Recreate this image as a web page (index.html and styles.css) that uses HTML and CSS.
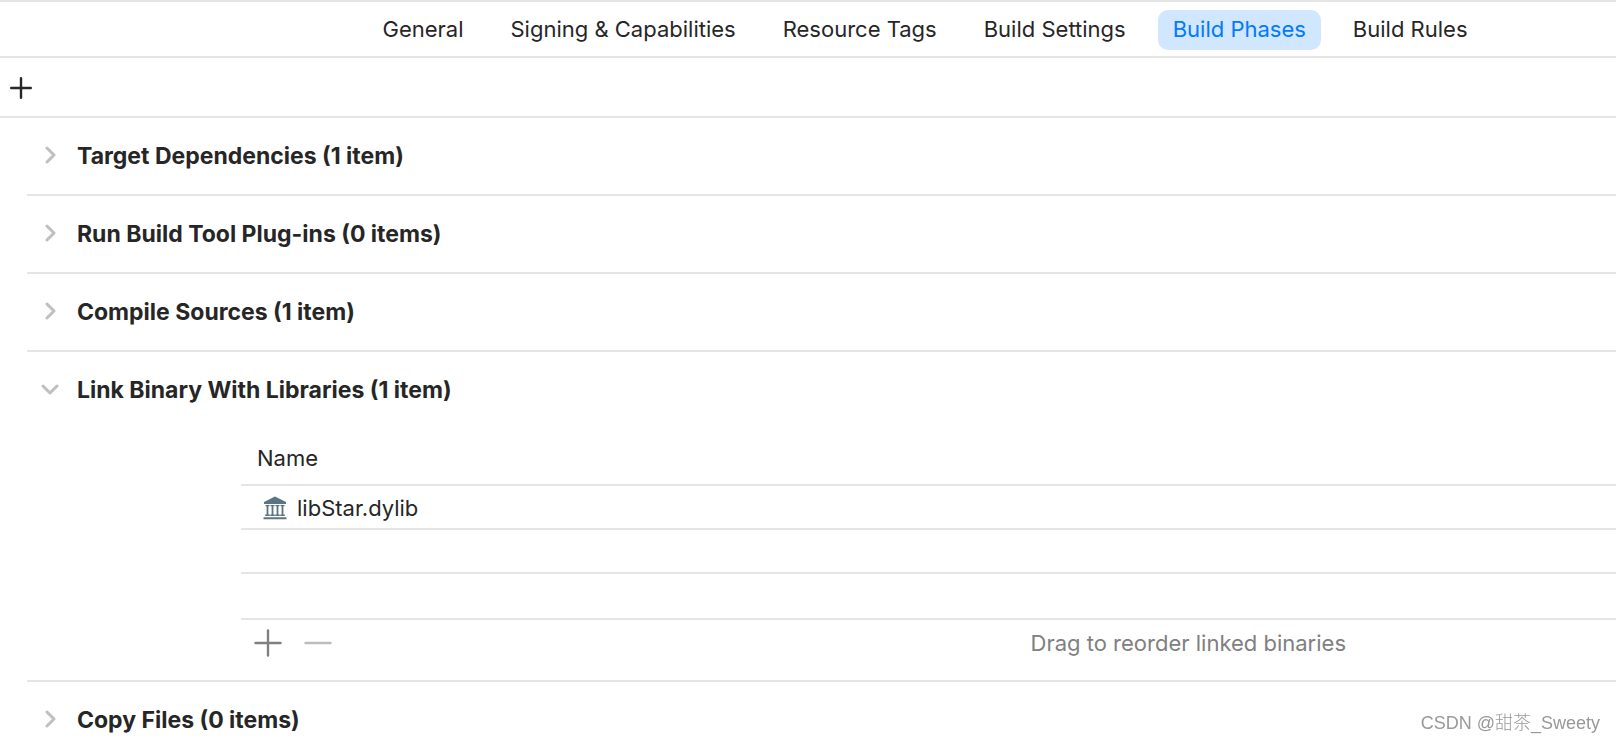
FILE: index.html
```html
<!DOCTYPE html>
<html lang="en">
<head>
    <meta charset="UTF-8">
    <meta name="viewport" content="width=device-width, initial-scale=1.0">
    <title>Build Phases</title>
    <link rel="stylesheet" href="styles.css">
</head>
<body>
    <nav class="tabs">
        <button type="button" class="tab">General</button>
        <button type="button" class="tab">Signing &amp; Capabilities</button>
        <button type="button" class="tab">Resource Tags</button>
        <button type="button" class="tab">Build Settings</button>
        <button type="button" class="tab active" aria-current="page">Build Phases</button>
        <button type="button" class="tab">Build Rules</button>
    </nav>

    <div class="toolbar">
        <button type="button" class="icon-btn add-phase" aria-label="Add build phase">
            <svg width="22" height="22" viewBox="0 0 22 22"><path d="M11 1.2v19.6M1.2 11h19.6"/></svg>
        </button>
    </div>

    <main class="phases">
        <details class="phase">
            <summary>
                <svg class="chevron" width="18" height="18" viewBox="0 0 18 18"><path d="M6 2l7 7-7 7"/></svg>
                <h2>Target Dependencies (1 item)</h2>
            </summary>
        </details>

        <details class="phase">
            <summary>
                <svg class="chevron" width="18" height="18" viewBox="0 0 18 18"><path d="M6 2l7 7-7 7"/></svg>
                <h2>Run Build Tool Plug-ins (0 items)</h2>
            </summary>
        </details>

        <details class="phase">
            <summary>
                <svg class="chevron" width="18" height="18" viewBox="0 0 18 18"><path d="M6 2l7 7-7 7"/></svg>
                <h2>Compile Sources (1 item)</h2>
            </summary>
        </details>

        <details class="phase" open>
            <summary>
                <svg class="chevron" width="18" height="18" viewBox="0 0 18 18"><path d="M6 2l7 7-7 7"/></svg>
                <h2>Link Binary With Libraries (1 item)</h2>
            </summary>

            <div class="phase-body">
                <table class="libraries">
                    <thead>
                        <tr><th scope="col">Name</th></tr>
                    </thead>
                    <tbody>
                        <tr>
                            <td>
                                <div class="library">
                                    <svg class="library-icon" width="24" height="24" viewBox="0 0 24 24">
                                        <path d="M12 .5L23 6v2H1V6z"/>
                                        <path d="M2.5 9h4v1.2H5.4v8.3h1.4V20H2.2v-1.5h1.4v-8.3H2.5zM7.5 9h4v1.2h-1.1v8.3h1.4V20H7.2v-1.5h1.4v-8.3H7.5zM12.5 9h4v1.2h-1.1v8.3h1.4V20h-4.6v-1.5h1.4v-8.3h-1.1zM17.5 9h4v1.2h-1.1v8.3h1.4V20h-4.6v-1.5h1.4v-8.3h-1.1z"/>
                                        <rect x=".5" y="21.2" width="23" height="2.1" rx=".5"/>
                                    </svg>
                                    <span>libStar.dylib</span>
                                </div>
                            </td>
                        </tr>
                        <tr><td></td></tr>
                        <tr><td></td></tr>
                    </tbody>
                </table>

                <div class="table-footer">
                    <button type="button" class="icon-btn" aria-label="Add library">
                        <svg width="28" height="28" viewBox="0 0 28 28"><path d="M14 1.5v25M1.5 14h25"/></svg>
                    </button>
                    <button type="button" class="icon-btn" aria-label="Remove library" disabled>
                        <svg width="28" height="28" viewBox="0 0 28 28"><path d="M1.5 14h25"/></svg>
                    </button>
                    <p class="hint">Drag to reorder linked binaries</p>
                </div>
            </div>
        </details>

        <details class="phase">
            <summary>
                <svg class="chevron" width="18" height="18" viewBox="0 0 18 18"><path d="M6 2l7 7-7 7"/></svg>
                <h2>Copy Files (0 items)</h2>
            </summary>
        </details>
    </main>

    <div class="watermark">CSDN @甜茶_Sweety</div>
</body>
</html>
```
FILE: styles.css
```css
* {
  margin: 0;
  padding: 0;
  box-sizing: border-box;
}

body {
  height: 100vh;
  overflow: hidden;
  border-top: 2px solid #e5e5e5;
  background-color: #fff;
  color: #262626;
  font-family: Inter, "Noto Sans CJK SC", sans-serif;
  font-size: 22px;
  line-height: 28px;
}

button {
  border: none;
  background: none;
  color: inherit;
  font: inherit;
  cursor: pointer;
}

/* Tabs */
.tabs {
  display: flex;
  justify-content: center;
  gap: 17px;
  padding: 8px 0 6px 234px;
  border-bottom: 2px solid #e5e5e5;
}

.tab {
  height: 40px;
  padding: 0 15px 2px;
  border-radius: 10px;
  white-space: nowrap;
}

.tab.active {
  background-color: #d1e6ff;
  color: #007aff;
}

/* Toolbar */
.toolbar {
  display: flex;
  align-items: center;
  height: 60px;
  padding: 2px 0 0 10px;
  border-bottom: 2px solid #e5e5e5;
}

.icon-btn {
  display: flex;
  color: #808080;
}

.icon-btn:disabled {
  color: #bdbdbd;
  cursor: default;
}

.icon-btn svg {
  fill: none;
  stroke: currentColor;
  stroke-width: 2.4;
  stroke-linecap: round;
}

.add-phase {
  color: #262626;
}

/* Build phases */
.phases {
  padding-left: 27px;
}

.phase {
  border-bottom: 2px solid #e5e5e5;
}

.phase summary {
  display: flex;
  align-items: center;
  gap: 18px;
  height: 76px;
  padding-left: 14px;
  list-style: none;
  cursor: pointer;
}

.phase h2 {
  font-size: 23px;
  font-weight: 700;
}

.chevron {
  margin-bottom: 3px;
  fill: none;
  stroke: #bfbfbf;
  stroke-width: 3;
  stroke-linecap: round;
  stroke-linejoin: round;
}

.phase[open] .chevron {
  transform: rotate(90deg);
}

.phase-body {
  padding: 4px 0 14px 214px;
}

/* Linked libraries */
.libraries {
  width: 100%;
  border-collapse: separate;
  border-spacing: 0;
}

.libraries th,
.libraries td {
  height: 44px;
  padding: 0 16px;
  border-bottom: 2px solid #e5e5e5;
  font-weight: 400;
  text-align: left;
}

.libraries thead th {
  height: 54px;
}

.libraries tbody tr:last-child td {
  height: 46px;
}

.library {
  display: flex;
  align-items: center;
  gap: 10px;
  padding: 2px 0 0 6px;
}

.library-icon {
  fill: #5b7485;
}

.table-footer {
  display: flex;
  align-items: center;
  gap: 22px;
  height: 46px;
  padding-left: 13px;
}

.hint {
  margin-left: auto;
  margin-right: 270px;
  color: #808080;
}

.watermark {
  position: fixed;
  right: 16px;
  bottom: 5px;
  color: #999;
  font-family: "Liberation Sans", "Noto Sans CJK SC", sans-serif;
  font-size: 18px;
  font-weight: 300;
}
```
